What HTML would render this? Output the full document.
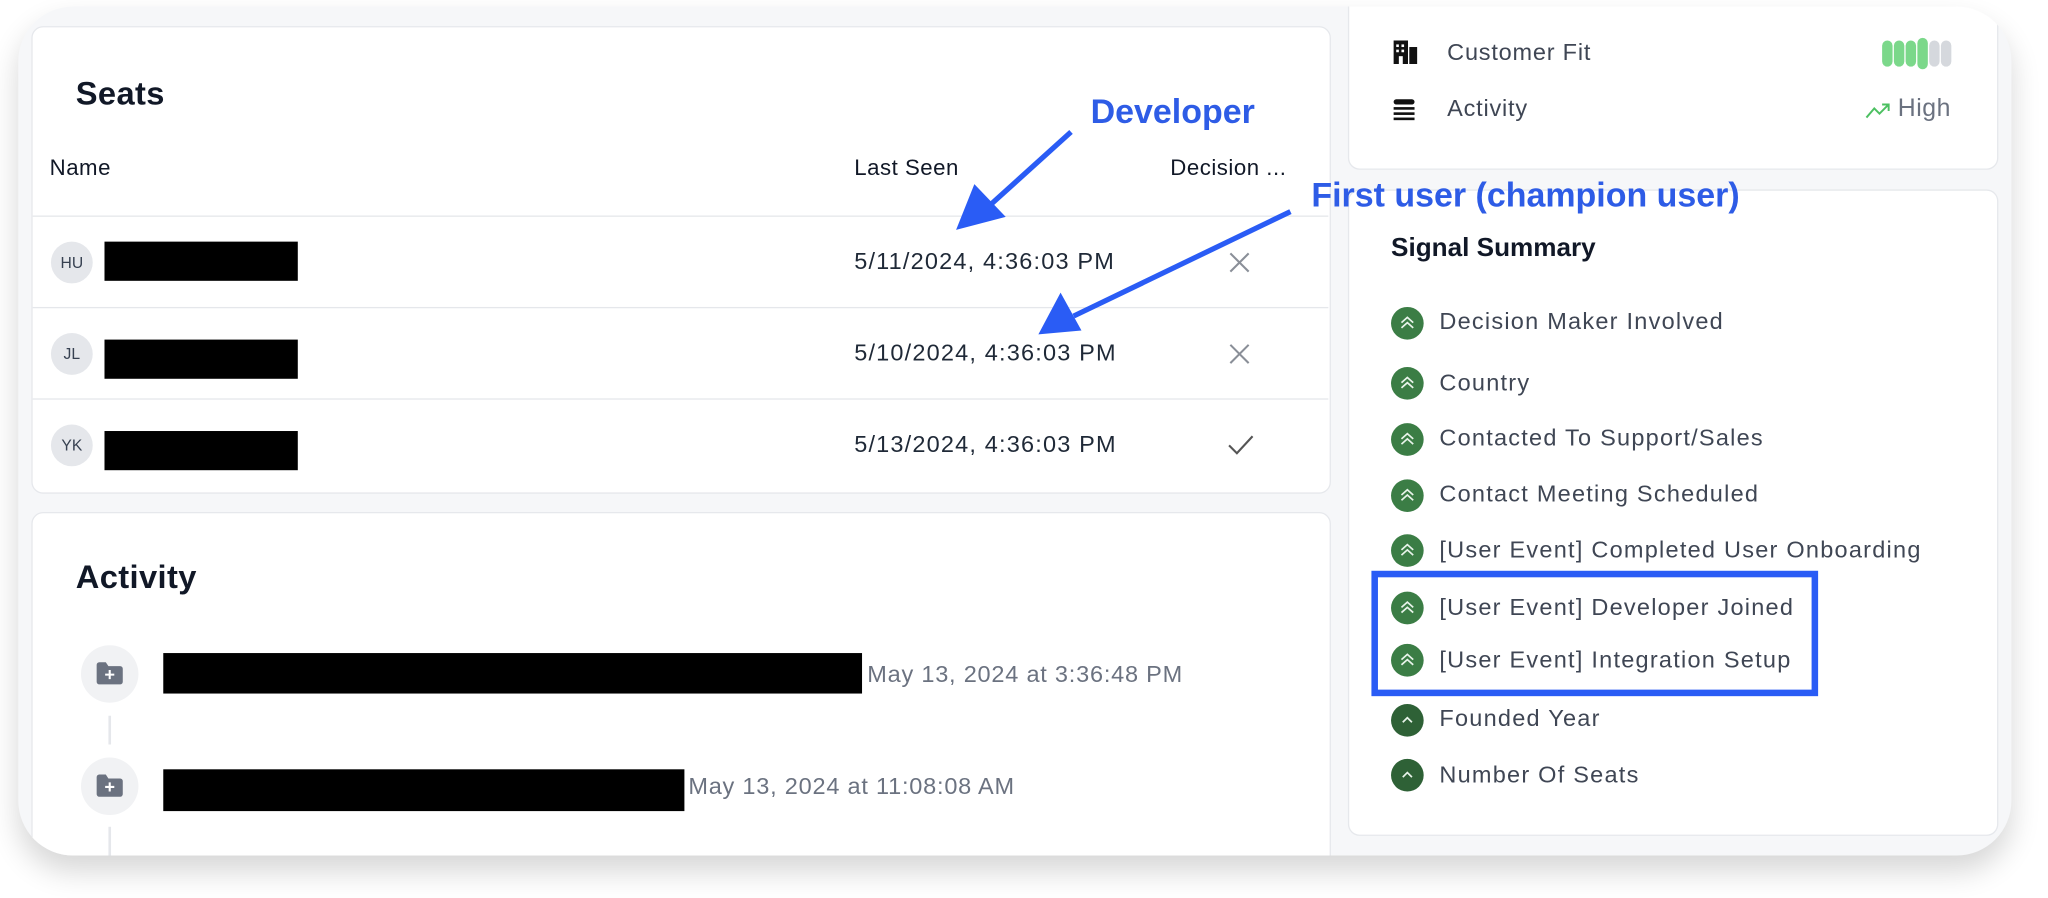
<!DOCTYPE html>
<html><head><meta charset="utf-8"><style>
html,body{margin:0;padding:0;background:#fff;overflow:hidden}
body{width:2048px;height:898px;position:relative}
#s{position:absolute;left:0;top:0;width:1568px;height:688px;transform:scale(1.30612);transform-origin:0 0;font-family:"Liberation Sans",sans-serif;color:#374151}
.a{position:absolute;white-space:nowrap}
.card{position:absolute;background:#fff;border:1px solid #e6e8ec;border-radius:9px}
.t{font-size:18px;color:#1f2937;letter-spacing:0.9px}
.hd{font-size:17px;color:#111827;letter-spacing:0.4px}
.av{position:absolute;width:32px;height:32px;border-radius:50%;background:#e5e7eb;font-size:12px;color:#374151;text-align:center;line-height:32px}
.blk{position:absolute;background:#000}
.sig{position:absolute;left:1065px;width:25px;height:25px;border-radius:50%;background:#3b7d45}
.sig svg{position:absolute;left:0;top:0}
.st{position:absolute;left:1102px;font-size:18px;color:#3f4654;white-space:nowrap;letter-spacing:0.95px}
.ic{position:absolute;width:44px;height:44px;border-radius:50%;background:#f1f2f4}
#box{position:absolute;left:14px;top:5px;width:1526px;height:650px;background:#f6f7f9;border-radius:42px;box-shadow:0 12px 22px rgba(0,0,0,.16);overflow:hidden}
#in{position:absolute;left:-14px;top:-5px;width:1568px;height:688px}
</style></head><body><div id="s">
<div id="box"><div id="in">

<div class="card" style="left:24px;top:20px;width:993px;height:356px"></div>
<div class="a" style="left:58px;top:58px;font-size:25px;color:#111827;font-weight:bold;letter-spacing:0.3px">Seats</div>
<div class="a hd" style="left:38px;top:119px">Name</div>
<div class="a hd" style="left:654px;top:119px">Last Seen</div>
<div class="a hd" style="left:896px;top:119px">Decision ...</div>
<div style="position:absolute;left:25px;top:165px;width:992px;height:1px;background:#e5e7eb"></div>
<div style="position:absolute;left:25px;top:235px;width:992px;height:1px;background:#e5e7eb"></div>
<div style="position:absolute;left:25px;top:305px;width:992px;height:1px;background:#e5e7eb"></div>
<div class="av" style="left:39px;top:185px">HU</div>
<div class="av" style="left:39px;top:255px">JL</div>
<div class="av" style="left:39px;top:325px">YK</div>
<div class="blk" style="left:80px;top:185px;width:148px;height:30px"></div>
<div class="blk" style="left:80px;top:260px;width:148px;height:30px"></div>
<div class="blk" style="left:80px;top:330px;width:148px;height:30px"></div>
<div class="a t" style="left:654px;top:190px">5/11/2024, 4:36:03 PM</div>
<div class="a t" style="left:654px;top:260px">5/10/2024, 4:36:03 PM</div>
<div class="a t" style="left:654px;top:330px">5/13/2024, 4:36:03 PM</div>
<svg style="position:absolute;left:940px;top:192px" width="18" height="18"><path d="M2 2L16 16M16 2L2 16" stroke="#8a8f98" stroke-width="1.6"/></svg>
<svg style="position:absolute;left:940px;top:262px" width="18" height="18"><path d="M2 2L16 16M16 2L2 16" stroke="#8a8f98" stroke-width="1.6"/></svg>
<svg style="position:absolute;left:940px;top:332px" width="20" height="18"><path d="M1 9L7 15L19 2" stroke="#555" stroke-width="1.6" fill="none"/></svg>

<div class="card" style="left:24px;top:392px;width:993px;height:320px"></div>
<div class="a" style="left:58px;top:428px;font-size:25px;color:#111827;font-weight:bold;letter-spacing:0.3px">Activity</div>
<div class="ic" style="left:62px;top:494px"></div>
<div class="ic" style="left:62px;top:580px"></div>
<svg style="position:absolute;left:73px;top:506px" width="22" height="20"><path d="M1 3a2 2 0 0 1 2-2h5l2 3h9a2 2 0 0 1 2 2v10a2 2 0 0 1-2 2H3a2 2 0 0 1-2-2z" fill="#6b7280"/><path d="M11 7v7M7.5 10.5h7" stroke="#fff" stroke-width="1.6"/></svg>
<svg style="position:absolute;left:73px;top:592px" width="22" height="20"><path d="M1 3a2 2 0 0 1 2-2h5l2 3h9a2 2 0 0 1 2 2v10a2 2 0 0 1-2 2H3a2 2 0 0 1-2-2z" fill="#6b7280"/><path d="M11 7v7M7.5 10.5h7" stroke="#fff" stroke-width="1.6"/></svg>
<div style="position:absolute;left:83px;top:548px;width:2px;height:22px;background:#e5e7eb"></div>
<div style="position:absolute;left:83px;top:633px;width:2px;height:30px;background:#e5e7eb"></div>
<div class="blk" style="left:125px;top:500px;width:535px;height:31px"></div>
<div class="blk" style="left:125px;top:589px;width:399px;height:32px"></div>
<div class="a" style="left:664px;top:506px;font-size:18px;color:#6b7280;letter-spacing:0.6px">May 13, 2024 at 3:36:48 PM</div>
<div class="a" style="left:527px;top:592px;font-size:18px;color:#6b7280;letter-spacing:0.6px">May 13, 2024 at 11:08:08 AM</div>

<div class="card" style="left:1032px;top:-20px;width:496px;height:148px"></div>
<svg style="position:absolute;left:1066px;top:30px" width="20" height="20"><rect x="1" y="1" width="11" height="18" fill="#111"/><rect x="13" y="6" width="6" height="13" fill="#111"/><g fill="#fff"><rect x="3" y="4" width="2" height="2"/><rect x="7" y="4" width="2" height="2"/><rect x="3" y="8" width="2" height="2"/><rect x="7" y="8" width="2" height="2"/><rect x="5" y="13" width="3" height="6"/></g></svg>
<div class="a" style="left:1108px;top:30px;font-size:18px;color:#3f4654;letter-spacing:0.6px">Customer Fit</div>
<div style="position:absolute;left:1441px;top:31px;width:8px;height:20px;border-radius:4px;background:#7bd88a"></div>
<div style="position:absolute;left:1450px;top:31px;width:8px;height:20px;border-radius:4px;background:#7bd88a"></div>
<div style="position:absolute;left:1459px;top:31px;width:8px;height:20px;border-radius:4px;background:#7bd88a"></div>
<div style="position:absolute;left:1468px;top:29px;width:8px;height:24px;border-radius:4px;background:#7bd88a"></div>
<div style="position:absolute;left:1477px;top:31px;width:8px;height:20px;border-radius:4px;background:#d5d8dd"></div>
<div style="position:absolute;left:1486px;top:31px;width:8px;height:20px;border-radius:4px;background:#d5d8dd"></div>
<svg style="position:absolute;left:1066px;top:75px" width="18" height="18"><rect x="1" y="1" width="16" height="4" rx="2" fill="#111"/><rect x="1" y="7" width="16" height="2" fill="#111"/><rect x="1" y="11" width="16" height="2" fill="#111"/><rect x="1" y="15" width="16" height="2" fill="#111"/></svg>
<div class="a" style="left:1108px;top:73px;font-size:18px;color:#3f4654;letter-spacing:0.6px">Activity</div>
<svg style="position:absolute;left:1428px;top:78px" width="20" height="14"><path d="M1 12L7 5L11 9L18 2M13 2h5v5" stroke="#4cc061" stroke-width="1.5" fill="none"/></svg>
<div class="a" style="left:1453px;top:73px;font-size:19px;color:#6b7280;letter-spacing:0.4px">High</div>

<div class="card" style="left:1032px;top:145px;width:496px;height:493px"></div>
<div class="a" style="left:1065px;top:179px;font-size:20px;font-weight:bold;color:#111827">Signal Summary</div>

<div class="sig" style="top:235px"><svg width="25" height="25"><path d="M8 12L12.5 8L17 12M8 16L12.5 12L17 16" stroke="#e8f3ea" stroke-width="1.3" fill="none"/></svg></div>
<div class="st" style="top:236px">Decision Maker Involved</div>
<div class="sig" style="top:281px"><svg width="25" height="25"><path d="M8 12L12.5 8L17 12M8 16L12.5 12L17 16" stroke="#e8f3ea" stroke-width="1.3" fill="none"/></svg></div>
<div class="st" style="top:283px">Country</div>
<div class="sig" style="top:324px"><svg width="25" height="25"><path d="M8 12L12.5 8L17 12M8 16L12.5 12L17 16" stroke="#e8f3ea" stroke-width="1.3" fill="none"/></svg></div>
<div class="st" style="top:325px">Contacted To Support/Sales</div>
<div class="sig" style="top:367px"><svg width="25" height="25"><path d="M8 12L12.5 8L17 12M8 16L12.5 12L17 16" stroke="#e8f3ea" stroke-width="1.3" fill="none"/></svg></div>
<div class="st" style="top:368px">Contact Meeting Scheduled</div>
<div class="sig" style="top:409px"><svg width="25" height="25"><path d="M8 12L12.5 8L17 12M8 16L12.5 12L17 16" stroke="#e8f3ea" stroke-width="1.3" fill="none"/></svg></div>
<div class="st" style="top:411px">[User Event] Completed User Onboarding</div>
<div class="sig" style="top:453px"><svg width="25" height="25"><path d="M8 12L12.5 8L17 12M8 16L12.5 12L17 16" stroke="#e8f3ea" stroke-width="1.3" fill="none"/></svg></div>
<div class="st" style="top:455px">[User Event] Developer Joined</div>
<div class="sig" style="top:493px"><svg width="25" height="25"><path d="M8 12L12.5 8L17 12M8 16L12.5 12L17 16" stroke="#e8f3ea" stroke-width="1.3" fill="none"/></svg></div>
<div class="st" style="top:495px">[User Event] Integration Setup</div>
<div class="sig" style="top:539px;background:#2e6136"><svg width="25" height="25"><path d="M9 14L12.5 10.5L16 14" stroke="#e8f3ea" stroke-width="1.3" fill="none"/></svg></div>
<div class="st" style="top:540px">Founded Year</div>
<div class="sig" style="top:581px;background:#2e6136"><svg width="25" height="25"><path d="M9 14L12.5 10.5L16 14" stroke="#e8f3ea" stroke-width="1.3" fill="none"/></svg></div>
<div class="st" style="top:583px">Number Of Seats</div>

</div></div>

<div style="position:absolute;left:1050px;top:437px;width:332px;height:86px;border:5px solid #2a5cf5"></div>

<div class="a" style="left:835px;top:70px;font-size:26px;color:#2e5ce6;font-weight:bold">Developer</div>
<div class="a" style="left:1004px;top:134px;font-size:26px;color:#2e5ce6;font-weight:bold">First user (champion user)</div>
<svg style="position:absolute;left:0;top:0" width="1568" height="688">
<path d="M820 101L757 158" stroke="#2a5cf5" stroke-width="4"/>
<path d="M732 176L746 141L770 166Z" fill="#2a5cf5"/>
<path d="M988 162L822 242" stroke="#2a5cf5" stroke-width="4"/>
<path d="M795 256L812 224L828 253Z" fill="#2a5cf5"/>
</svg>
</div></body></html>
